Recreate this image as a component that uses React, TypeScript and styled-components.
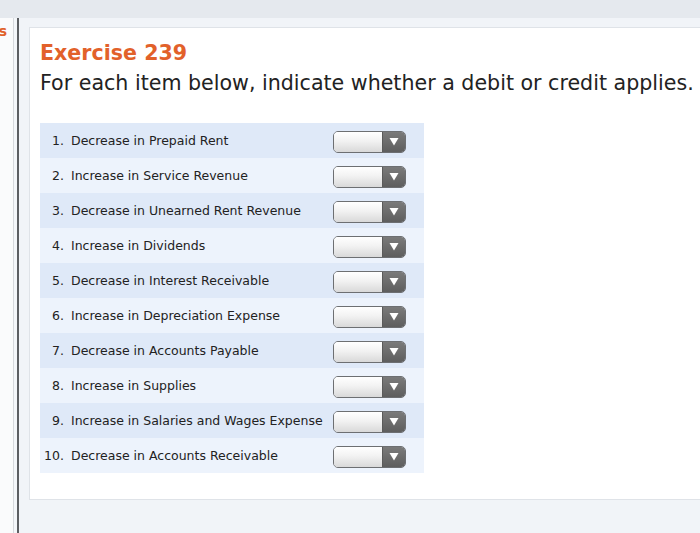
import React from "react";
import styled, { createGlobalStyle } from "styled-components";

const Global = createGlobalStyle`
  html, body { margin: 0; padding: 0; }
  body {
    background: #f4f7fa;
    font-family: "DejaVu Sans", Verdana, sans-serif;
    width: 700px;
    height: 533px;
    overflow: hidden;
  }
`;

const TopBar = styled.div`
  height: 18px;
  background: #e5e9ee;
`;

const Main = styled.div`
  display: flex;
  height: 515px;
`;

const LeftRail = styled.div`
  width: 14px;
  background: #fafbfc;
  color: #e0622a;
  font-size: 14px;
  font-weight: bold;
  overflow: hidden;
  display: flex;
  justify-content: flex-end;
  padding-top: 5px;
  box-sizing: border-box;
  border-right: 1px solid #d6d9dd;
`;

const RailText = styled.span`
  margin-right: 6px;
  line-height: 16px;
`;

const DarkRule = styled.div`
  width: 2px;
  margin-left: 3px;
  background: #5c5f63;
`;

const Workspace = styled.div`
  flex: 1;
  background: #f1f4f8;
  padding: 9px 0 0 10px;
  display: flex;
  flex-direction: column;
`;

const Panel = styled.div`
  background: #ffffff;
  border: 1px solid #dfe3e8;
  border-right: none;
  height: 473px;
  box-sizing: border-box;
  padding: 12px 0 0 10px;
`;

const Title = styled.h1`
  margin: 0;
  font-size: 20.6px;
  line-height: 26px;
  font-weight: bold;
  color: #e2612a;
`;

const Instruction = styled.p`
  margin: 3px 0 0 0;
  font-size: 20.6px;
  line-height: 28px;
  color: #222;
  white-space: nowrap;
`;

const Table = styled.div`
  margin-top: 26px;
  width: 384px;
  display: flex;
  flex-direction: column;
`;

const Row = styled.div<{ $odd: boolean }>`
  height: 35px;
  display: flex;
  align-items: center;
  background: ${(p) => (p.$odd ? "#dfe9f8" : "#edf3fc")};
  font-size: 12.5px;
  color: #222;
`;

const Num = styled.span`
  width: 24px;
  text-align: right;
  flex-shrink: 0;
`;

const Label = styled.span`
  margin-left: 7px;
  flex: 1;
  white-space: nowrap;
`;

const Select = styled.div`
  width: 73px;
  height: 22px;
  box-sizing: border-box;
  border: 1px solid #6d6f72;
  border-radius: 5px;
  display: flex;
  overflow: hidden;
  margin-right: 18px;
  margin-top: 2px;
  flex-shrink: 0;
`;

const SelectBody = styled.div`
  flex: 1;
  background: linear-gradient(#ffffff, #f2f2f2 45%, #d9d9d9);
`;

const SelectButton = styled.div`
  width: 22px;
  background: linear-gradient(#7a7a7a, #5e5e5e);
  border-left: 1px solid #5a5a5a;
  display: flex;
  align-items: center;
  justify-content: center;
`;

const items = [
  "Decrease in Prepaid Rent",
  "Increase in Service Revenue",
  "Decrease in Unearned Rent Revenue",
  "Increase in Dividends",
  "Decrease in Interest Receivable",
  "Increase in Depreciation Expense",
  "Decrease in Accounts Payable",
  "Increase in Supplies",
  "Increase in Salaries and Wages Expense",
  "Decrease in Accounts Receivable",
];

const Arrow = () => (
  <svg width="10" height="9" viewBox="0 0 10 9">
    <path d="M0.5 1 L9.5 1 L5 8.5 Z" fill="#ffffff" />
  </svg>
);

export default function App() {
  return (
    <>
      <Global />
      <TopBar />
      <Main>
        <LeftRail>
          <RailText>s</RailText>
        </LeftRail>
        <DarkRule />
        <Workspace>
          <Panel>
            <Title>Exercise 239</Title>
            <Instruction>
              For each item below, indicate whether a debit or credit applies.
            </Instruction>
            <Table>
              {items.map((t, i) => (
                <Row key={i} $odd={i % 2 === 0}>
                  <Num>{i + 1}.</Num>
                  <Label>{t}</Label>
                  <Select>
                    <SelectBody />
                    <SelectButton>
                      <Arrow />
                    </SelectButton>
                  </Select>
                </Row>
              ))}
            </Table>
          </Panel>
        </Workspace>
      </Main>
    </>
  );
}
